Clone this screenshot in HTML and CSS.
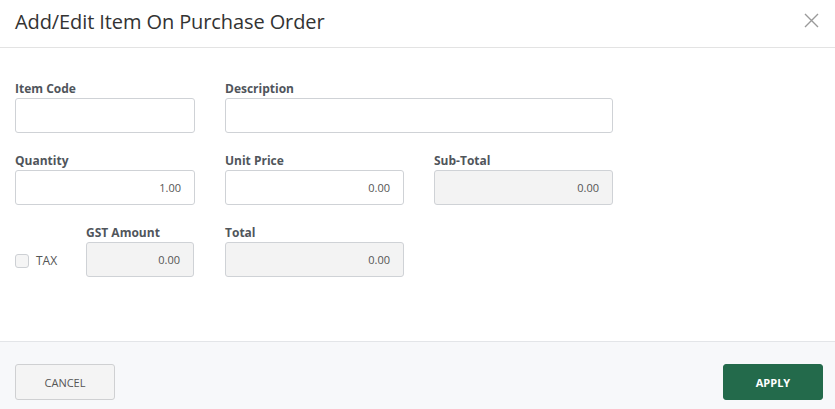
FILE: index.html
```html
<!DOCTYPE html>
<html>
<head>
<meta charset="utf-8">
<link rel="stylesheet" href="styles.css">
</head>
<body>
<div class="modal">
  <div class="modal-header">
    <h1 class="modal-title">Add/Edit Item On Purchase Order</h1>
    <button class="close" aria-label="Close">
      <svg width="15" height="15" viewBox="0 0 15 15"><path d="M1 1L14 14M14 1L1 14" stroke="#9a9a9a" stroke-width="1.4" fill="none"/></svg>
    </button>
  </div>
  <div class="modal-body">
    <div class="form-grid">
      <div class="field">
        <label class="label">Item Code</label>
        <div class="input"></div>
      </div>
      <div class="field span2">
        <label class="label">Description</label>
        <div class="input"></div>
      </div>

      <div class="field">
        <label class="label">Quantity</label>
        <div class="input num">1.00</div>
      </div>
      <div class="field">
        <label class="label">Unit Price</label>
        <div class="input num">0.00</div>
      </div>
      <div class="field">
        <label class="label">Sub-Total</label>
        <div class="input num disabled">0.00</div>
      </div>

      <div class="field split">
        <div class="tax">
          <span class="checkbox"></span>
          <span class="tax-label">TAX</span>
        </div>
        <div class="field gst">
          <label class="label">GST Amount</label>
          <div class="input num disabled">0.00</div>
        </div>
      </div>
      <div class="field">
        <label class="label">Total</label>
        <div class="input num disabled">0.00</div>
      </div>
    </div>
  </div>
  <div class="modal-footer">
    <button class="btn btn-cancel">CANCEL</button>
    <button class="btn btn-apply">APPLY</button>
  </div>
</div>
</body>
</html>
```

FILE: styles.css
```css
* { box-sizing: border-box; }
html, body { margin: 0; padding: 0; background: #fff; }
body {
  font-family: "Open Sans", "Noto Sans", "Liberation Sans", sans-serif;
  color: #333;
  width: 835px;
  height: 409px;
  overflow: hidden;
}
.modal {
  display: flex;
  flex-direction: column;
  height: 409px;
}
.modal-header {
  height: 48px;
  border-bottom: 1px solid #e3e3e3;
  display: flex;
  align-items: center;
  justify-content: space-between;
  padding: 0 16px 4px 15px;
}
.modal-title {
  margin: 0;
  font-weight: 400;
  font-size: 20px;
  letter-spacing: -0.1px;
  color: #333;
}
.close {
  border: 0;
  background: none;
  padding: 0;
  margin-top: -2px;
  width: 15px;
  height: 15px;
  display: block;
}
.close svg { display: block; }
.modal-body {
  flex: 1;
  padding: 31px 15px 0 15px;
}
.form-grid {
  display: grid;
  grid-template-columns: 180px 179px 179px;
  column-gap: 30px;
  row-gap: 18px;
}
.field {
  display: flex;
  flex-direction: column;
}
.span2 { grid-column: span 2; }
.label {
  font-size: 12px;
  font-weight: 700;
  color: #50555b;
  line-height: 19px;
  height: 19px;
}
.input {
  height: 35px;
  border: 1px solid #cfd2d6;
  border-radius: 3px;
  background: #fff;
  font-size: 11px;
  color: #555;
  padding: 0 13px;
  display: flex;
  align-items: center;
}
.input.num { justify-content: flex-end; }
.input.disabled { background: #f3f3f3; }
.split {
  flex-direction: row;
  align-items: stretch;
}
.tax {
  width: 71px;
  display: flex;
  align-items: center;
  padding-top: 21px;
}
.checkbox {
  width: 14px;
  height: 14px;
  border: 1px solid #cdd0d4;
  border-radius: 3px;
  background: #f5f5f5;
  display: inline-block;
}
.tax-label {
  font-size: 12px;
  color: #555;
  margin-left: 7px;
}
.gst { width: 108px; }
.modal-footer {
  height: 68px;
  border-top: 1px solid #e3e5e8;
  background: #f7f8fa;
  display: flex;
  justify-content: space-between;
  align-items: flex-start;
  padding: 22px 12px 0 15px;
}
.btn {
  width: 100px;
  height: 36px;
  border-radius: 3px;
  font-family: "Open Sans", "Noto Sans", sans-serif;
  font-size: 11px;
  padding: 0;
}
.btn-cancel {
  width: 100px;
  background: #f4f4f4;
  border: 1px solid #cfd0d2;
  color: #555;
}
.btn-apply {
  background: #236a4b;
  border: 1px solid #236a4b;
  color: #fff;
  font-weight: 700;
}
```
